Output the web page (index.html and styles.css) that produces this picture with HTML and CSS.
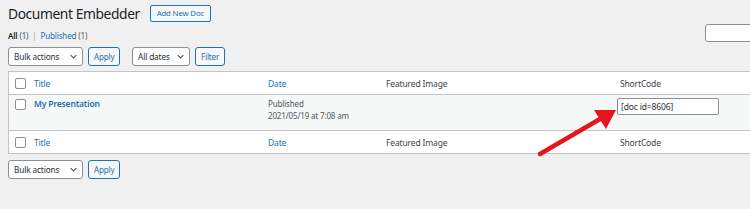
FILE: index.html
```html
<!DOCTYPE html>
<html>
<head>
<meta charset="utf-8">
<link rel="stylesheet" href="styles.css">
</head>
<body>
<div class="wrap">
  <div class="heading">
    <h1 class="title">Document Embedder</h1>
    <a class="add-new">Add New Doc</a>
  </div>
  <div class="subrow">
    <ul class="subsubsub">
      <li class="current">All <span class="count">(1)</span></li>
      <li class="sep">|</li>
      <li><a>Published <span class="count">(1)</span></a></li>
    </ul>
    <input class="search" type="text">
  </div>
  <div class="tablenav">
    <div class="select wide"><span>Bulk actions</span><svg viewBox="0 0 10 6" class="chev"><path d="M1 1l4 4 4-4" /></svg></div>
    <button class="btn">Apply</button>
    <div class="select dates"><span>All dates</span><svg viewBox="0 0 10 6" class="chev"><path d="M1 1l4 4 4-4" /></svg></div>
    <button class="btn">Filter</button>
  </div>
  <div class="list">
    <div class="row head">
      <div class="cb"><span class="box"></span></div>
      <div><a class="link">Title</a></div>
      <div><a class="link">Date</a></div>
      <div class="plain">Featured Image</div>
      <div class="plain sc">ShortCode</div>
    </div>
    <div class="row item">
      <div class="cb"><span class="box"></span></div>
      <div><a class="row-title">My Presentation</a></div>
      <div class="datecell">Published<br>2021/05/19 at 7:08 am</div>
      <div></div>
      <div><input class="code" type="text" value="[doc id=8606]" readonly></div>
    </div>
    <div class="row head foot">
      <div class="cb"><span class="box"></span></div>
      <div><a class="link">Title</a></div>
      <div><a class="link">Date</a></div>
      <div class="plain">Featured Image</div>
      <div class="plain sc">ShortCode</div>
    </div>
  </div>
  <div class="tablenav bottom">
    <div class="select wide"><span>Bulk actions</span><svg viewBox="0 0 10 6" class="chev"><path d="M1 1l4 4 4-4" /></svg></div>
    <button class="btn">Apply</button>
  </div>
</div>
<svg class="arrow" width="750" height="209" viewBox="0 0 750 209">
  <line x1="540" y1="154" x2="600" y2="119" stroke="#e3161b" stroke-width="4.5" stroke-linecap="round"/>
  <polygon points="616,110 594,110 606,129" fill="#e3161b"/>
</svg>
</body>
</html>
```
FILE: styles.css
```css
html, body {
  margin: 0;
  padding: 0;
}
body {
  background: #f0f0f1;
  font-family: "Noto Sans", "Open Sans", sans-serif;
  color: #3c434a;
  font-size: 8.5px;
  letter-spacing: -0.15px;
  width: 750px;
  height: 209px;
  overflow: hidden;
  position: relative;
}
.wrap {
  padding-left: 8px;
  width: 762px;
}
.heading {
  display: flex;
  align-items: center;
  height: 27px;
}
.title {
  margin: 0;
  font-size: 13.8px;
  font-weight: 400;
  color: #1d2327;
  line-height: 22px;
  letter-spacing: -0.4px;
}
.add-new {
  margin-left: 10px;
  box-sizing: border-box;
  width: 61px;
  text-align: center;
  border: 1px solid #2271b1;
  border-radius: 2px;
  color: #2271b1;
  background: #f6f7f7;
  font-size: 7.8px;
  height: 17px;
  line-height: 15px;
}
.subrow {
  display: flex;
  justify-content: space-between;
  align-items: flex-start;
  height: 20px;
}
.subsubsub {
  list-style: none;
  margin: 3px 0 0;
  padding: 0;
  display: flex;
  gap: 4px;
  font-size: 8px;
  color: #646970;
}
.subsubsub .current {
  color: #1d2327;
  font-weight: 600;
}
.subsubsub .current .count {
  font-weight: 400;
  color: #50575e;
}
.subsubsub .sep {
  color: #a7aaad;
}
.subsubsub a {
  color: #2271b1;
}
.subsubsub a .count {
  color: #50575e;
}
.search {
  width: 65px;
  height: 18px;
  margin: -3px 0 0;
  padding: 0;
  border: 1px solid #8c8f94;
  border-radius: 3px;
  background: #fff;
  box-sizing: border-box;
}
.tablenav {
  display: flex;
  align-items: center;
  height: 19px;
}
.tablenav.bottom {
  margin-top: 6px;
}
.select {
  box-sizing: border-box;
  height: 19px;
  border: 1px solid #8c8f94;
  border-radius: 3px;
  background: #fff;
  display: flex;
  align-items: center;
  justify-content: space-between;
  padding: 0 5px;
  color: #2c3338;
  font-size: 8.3px;
}
.select.wide {
  width: 75px;
}
.select.dates {
  width: 58px;
  margin-left: 12px;
}
.chev {
  width: 7px;
  height: 5px;
  fill: none;
  stroke: #50575e;
  stroke-width: 1.6;
}
.btn {
  box-sizing: border-box;
  height: 19px;
  margin: 0 0 0 5px;
  padding: 0 5px;
  border: 1px solid #2271b1;
  border-radius: 3px;
  background: #f6f7f7;
  color: #2271b1;
  font-family: inherit;
  letter-spacing: inherit;
  font-size: 8px;
}
.tablenav .btn:first-of-type {
  width: 32px;
}
.list {
  margin-top: 5px;
  width: 760px;
  background: #fff;
  border: 1px solid #c3c4c7;
}
.row {
  display: grid;
  grid-template-columns: 25px 234px 118px 231px 1fr;
  box-sizing: border-box;
}
.row.head {
  height: 23px;
  align-items: center;
  border-bottom: 1px solid #c3c4c7;
}
.row.head.foot {
  border-bottom: 0;
  border-top: 1px solid #c3c4c7;
  height: 23px;
}
.row.item {
  background: #f6f7f7;
  height: 35px;
  align-items: start;
}
.cb {
  padding-left: 6px;
}
.box {
  display: block;
  width: 9px;
  height: 9px;
  border: 1px solid #8c8f94;
  border-radius: 2px;
  background: #fff;
}
.item .box {
  margin-top: 4px;
}
.link {
  color: #2271b1;
}
.plain {
  color: #3c434a;
}
.sc {
  padding-left: 3px;
}
.row-title {
  display: block;
  margin-top: 3px;
  color: #2271b1;
  font-weight: 600;
  font-size: 8.5px;
  line-height: 12px;
}
.datecell {
  padding-top: 3px;
  line-height: 12px;
  color: #50575e;
  font-size: 8px;
}
.code {
  display: block;
  box-sizing: border-box;
  margin-top: 3px;
  width: 102px;
  height: 17px;
  border: 1px solid #8c8f94;
  border-radius: 2px;
  background: #fff;
  padding: 0 3px;
  font-family: inherit;
  letter-spacing: inherit;
  font-size: 8.5px;
  color: #2c3338;
}
.arrow {
  position: absolute;
  left: 0;
  top: 0;
  pointer-events: none;
}
```
